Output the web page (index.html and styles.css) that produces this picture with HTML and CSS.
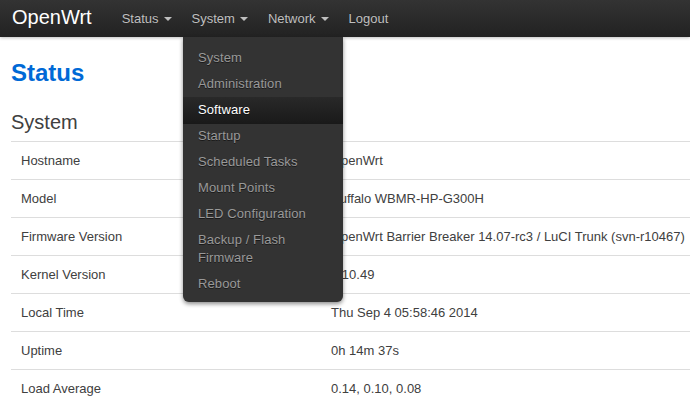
FILE: index.html
```html
<!DOCTYPE html>
<html>
<head>
<meta charset="utf-8">
<title>OpenWrt - Status</title>
<link rel="stylesheet" href="styles.css">
</head>
<body>
<header class="topbar">
  <a class="brand" href="#">OpenWrt</a>
  <nav class="nav">
    <a class="nav-link" href="#">Status<span class="caret"></span></a>
    <div class="nav-item">
      <a class="nav-link" href="#">System<span class="caret"></span></a>
    </div>
    <a class="nav-link" href="#">Network<span class="caret"></span></a>
    <a class="nav-link" href="#">Logout</a>
  </nav>
</header>

<ul class="dropdown-menu">
  <li><a href="#">System</a></li>
  <li><a href="#">Administration</a></li>
  <li class="active"><a href="#">Software</a></li>
  <li><a href="#">Startup</a></li>
  <li><a href="#">Scheduled Tasks</a></li>
  <li><a href="#">Mount Points</a></li>
  <li><a href="#">LED Configuration</a></li>
  <li><a href="#">Backup / Flash Firmware</a></li>
  <li><a href="#">Reboot</a></li>
</ul>

<main class="content">
  <h2 class="page-title">Status</h2>
  <h3 class="section-title">System</h3>
  <table class="info">
    <tr><td class="key">Hostname</td><td>OpenWrt</td></tr>
    <tr><td class="key">Model</td><td>Buffalo WBMR-HP-G300H</td></tr>
    <tr><td class="key">Firmware Version</td><td>OpenWrt Barrier Breaker 14.07-rc3 / LuCI Trunk (svn-r10467)</td></tr>
    <tr><td class="key">Kernel Version</td><td>3.10.49</td></tr>
    <tr><td class="key">Local Time</td><td>Thu Sep 4 05:58:46 2014</td></tr>
    <tr><td class="key">Uptime</td><td>0h 14m 37s</td></tr>
    <tr><td class="key">Load Average</td><td>0.14, 0.10, 0.08</td></tr>
  </table>
</main>
</body>
</html>
```

FILE: styles.css
```css
html, body {
  margin: 0;
  padding: 0;
  background: #fff;
  font-family: "Liberation Sans", Arial, Helvetica, sans-serif;
  font-size: 13px;
  color: #404040;
  overflow: hidden;
}

.topbar {
  height: 37px;
  display: flex;
  align-items: center;
  background: linear-gradient(#333333, #222222);
  box-shadow: 0 1px 3px rgba(0, 0, 0, 0.25);
}

.brand {
  display: block;
  padding: 0 20px 3px 12px;
  color: #ffffff;
  font-size: 20px;
  line-height: 1;
  text-decoration: none;
}

.nav {
  display: flex;
  align-items: center;
  height: 37px;
}

.nav-item {
  display: flex;
  align-items: center;
}

.nav-link {
  display: flex;
  align-items: center;
  padding: 0 10px;
  line-height: 19px;
  color: #bfbfbf;
  text-decoration: none;
  text-shadow: 0 -1px 0 rgba(0, 0, 0, 0.25);
}

.caret {
  display: inline-block;
  width: 0;
  height: 0;
  margin-left: 5px;
  margin-top: 1px;
  border-left: 4px solid transparent;
  border-right: 4px solid transparent;
  border-top: 4px solid #bfbfbf;
}

.dropdown-menu {
  position: absolute;
  left: 183px;
  top: 37px;
  width: 160px;
  margin: 0;
  padding: 8px 0 4px;
  list-style: none;
  background: #333333;
  border-radius: 0 0 6px 6px;
  box-shadow: 0 2px 4px rgba(0, 0, 0, 0.45);
  z-index: 10;
}

.dropdown-menu li {
  margin-top: -1px;
}

.dropdown-menu li:first-child {
  margin-top: 0;
}

.dropdown-menu a {
  display: block;
  padding: 4px 15px 5px;
  line-height: 18px;
  font-size: 13px;
  letter-spacing: 0.1px;
  color: #999999;
  text-decoration: none;
  text-shadow: 0 1px 0 rgba(0, 0, 0, 0.5);
}

.dropdown-menu .active a {
  color: #ffffff;
  background: linear-gradient(#292929, #191919);
}

.content {
  padding-left: 11px;
}

.page-title {
  margin: 18px 0 0;
  font-size: 24px;
  line-height: 36px;
  font-weight: bold;
  color: #0069d6;
}

.section-title {
  margin: 21px 0 8px;
  font-size: 20px;
  line-height: 21px;
  font-weight: normal;
  color: #404040;
}

.info {
  width: 100%;
  border-collapse: collapse;
  table-layout: fixed;
}

.info td {
  border-top: 1px solid #dddddd;
  padding: 10px 10px 9px;
  line-height: 18px;
  font-size: 13px;
  color: #404040;
  text-align: left;
  vertical-align: top;
  white-space: nowrap;
  overflow: visible;
}

.info td.key {
  width: 290px;
}
```
